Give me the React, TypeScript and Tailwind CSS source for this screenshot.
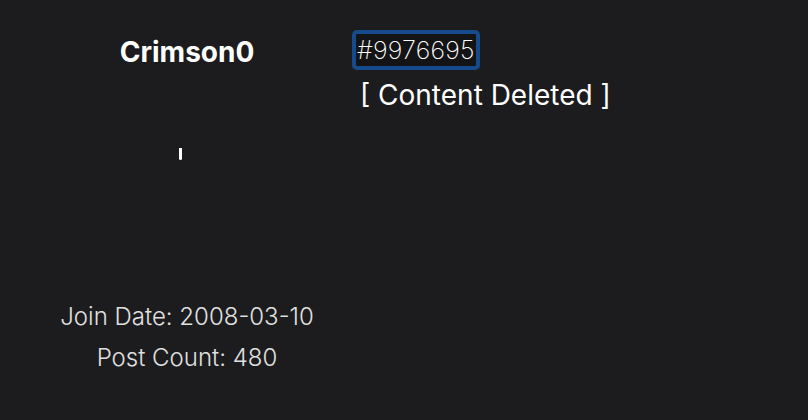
export default function App() {
  return (
    <main
      className="flex h-[420px] w-[808px] bg-[#1c1c1e] text-white"
      style={{ fontFamily: 'Inter, "Noto Sans", sans-serif' }}
    >
      <aside className="flex w-[352px] flex-col items-center pl-[22px] pt-[32px]">
        <h2 className="text-[28px] font-bold leading-[40px]">Crimson0</h2>
        <div className="mt-[76px] h-[12px] w-[3px] -translate-x-[7px] rounded-b-[2px] bg-white" />
        <div className="mt-[141px] flex flex-col items-center gap-[9px] text-[24px] font-light leading-[32px] text-[#e0e0e0]">
          <p>Join Date: 2008-03-10</p>
          <p>Post Count: 480</p>
        </div>
      </aside>

      <section className="flex flex-col items-start pt-[30px]">
        <a
          href="#"
          className="rounded-[5px] border-[4px] border-[#154a8c] bg-[#141416] px-[1px] text-[25px] font-extralight leading-[32px] tracking-[0.2px] text-white"
        >
          #9976695
        </a>
        <p className="ml-[8px] mt-[7px] text-[28px] leading-[36px]">[ Content Deleted ]</p>
      </section>
    </main>
  )
}
